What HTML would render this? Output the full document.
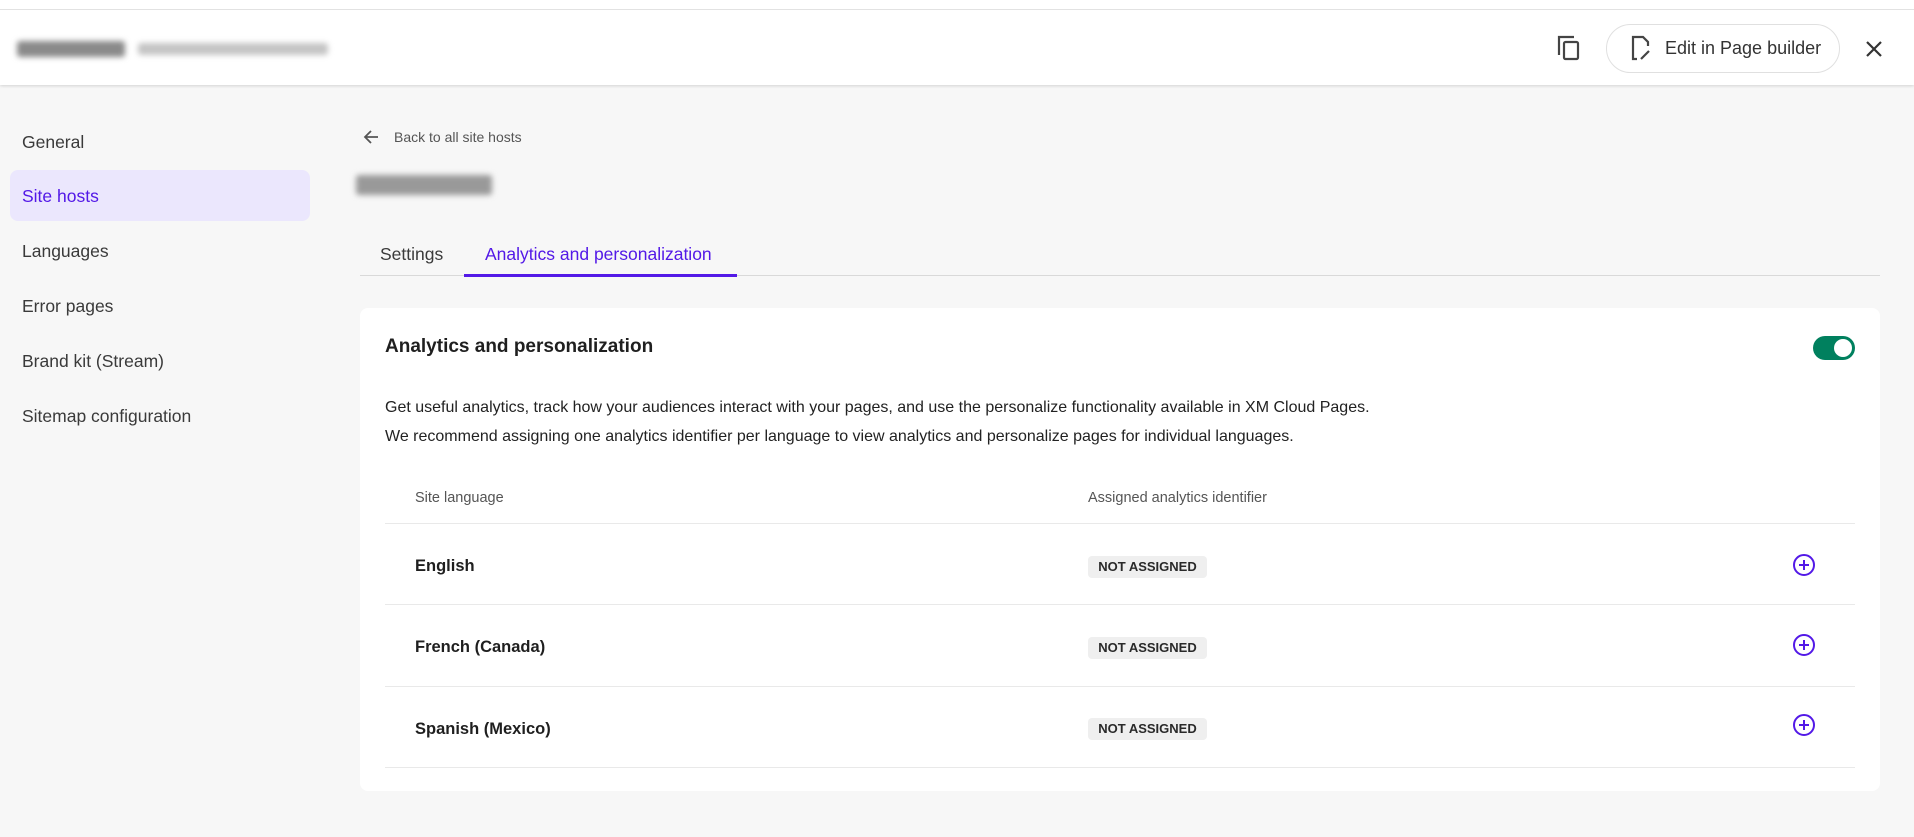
<!DOCTYPE html>
<html><head><meta charset="utf-8"><style>
*{box-sizing:border-box;margin:0;padding:0}
body{width:1914px;height:837px;background:#f7f7f7;font-family:"Liberation Sans",sans-serif;color:#1f1f1f;position:relative;overflow:hidden}
.abs{position:absolute}
.hdr{left:0;top:0;width:1914px;height:85px;background:#fff;border-top:10px solid #fff;box-shadow:0 1px 3px rgba(0,0,0,.15)}
.topline{left:0;top:9px;width:1914px;height:1px;background:#e2e2e2}
.blur{filter:blur(3px);background:#8a8a8a;border-radius:3px}
.nav{left:22px;font-size:17.5px;color:#3a3a3a}
.sel{left:10px;top:170px;width:300px;height:51px;background:#ebe7fd;border-radius:8px}
.card{left:360px;top:308px;width:1520px;height:483px;background:#fff;border-radius:8px}
.row{left:385px;width:1470px;height:1px;background:#e9e9e9}
.badge{left:1088px;width:119px;height:22px;background:#efefef;border-radius:4px;font-size:13px;font-weight:bold;color:#2a2a2a;line-height:22px;text-align:center}
.lang{left:415px;font-size:16.5px;font-weight:600;color:#1f1f1f}
</style></head><body>
<div class="abs hdr"></div>
<div class="abs topline"></div>
<div class="abs blur" style="left:17px;top:41px;width:108px;height:16px;background:#8a8a8a"></div>
<div class="abs blur" style="left:138px;top:43px;width:190px;height:12px;background:#c4c4c4"></div>
<svg class="abs" style="left:1556px;top:34px" width="28" height="28" viewBox="0 0 28 28" fill="none" stroke="#444" stroke-width="2.2"><path d="M3 21V3h15"/><rect x="8" y="8" width="14" height="17" rx="1.5"/></svg>
<div class="abs" style="left:1606px;top:24px;width:234px;height:49px;border:1px solid #e0e0e0;border-radius:25px"></div>
<svg class="abs" style="left:1628px;top:34px" width="26" height="28" viewBox="0 0 26 28" fill="none" stroke="#444" stroke-width="2.2"><path d="M9 25H5V3h10l5 5v4"/><path d="M13 25l8-8"/></svg>
<div class="abs" style="left:1665px;top:38px;font-size:18px;color:#333">Edit in Page builder</div>
<svg class="abs" style="left:1864px;top:39px" width="20" height="20" viewBox="0 0 20 20" stroke="#333" stroke-width="2.2"><path d="M3 3l14 14M17 3L3 17"/></svg>

<div class="abs sel"></div>
<div class="abs nav" style="top:132px">General</div>
<div class="abs nav" style="top:186px;color:#5319e7">Site hosts</div>
<div class="abs nav" style="top:241px">Languages</div>
<div class="abs nav" style="top:296px">Error pages</div>
<div class="abs nav" style="top:351px">Brand kit (Stream)</div>
<div class="abs nav" style="top:406px">Sitemap configuration</div>

<svg class="abs" style="left:362px;top:128px" width="18" height="18" viewBox="0 0 18 18" fill="none" stroke="#555" stroke-width="1.8"><path d="M16 9H3M9 3L3 9l6 6"/></svg>
<div class="abs" style="left:394px;top:129px;font-size:14px;color:#555">Back to all site hosts</div>
<div class="abs blur" style="left:356px;top:175px;width:136px;height:20px;background:#999"></div>

<div class="abs" style="left:380px;top:244px;font-size:17.5px;color:#3a3a3a">Settings</div>
<div class="abs" style="left:485px;top:244px;font-size:17.5px;color:#5319e7">Analytics and personalization</div>
<div class="abs" style="left:360px;top:275px;width:1520px;height:1px;background:#d9d9d9"></div>
<div class="abs" style="left:464px;top:274px;width:273px;height:3px;background:#5319e7"></div>

<div class="abs card"></div>
<div class="abs" style="left:385px;top:336px;font-size:19px;font-weight:600;color:#1f1f1f">Analytics and personalization</div>
<div class="abs" style="left:1813px;top:336px;width:42px;height:24px;border-radius:12px;background:#00805e"></div>
<div class="abs" style="left:1834px;top:339px;width:18px;height:18px;border-radius:50%;background:#fff"></div>
<div class="abs" style="left:385px;top:393px;font-size:16px;line-height:29px;color:#222">Get useful analytics, track how your audiences interact with your pages, and use the personalize functionality available in XM Cloud Pages.<br>We recommend assigning one analytics identifier per language to view analytics and personalize pages for individual languages.</div>
<div class="abs" style="left:415px;top:490px;font-size:14.5px;color:#555">Site language</div>
<div class="abs" style="left:1088px;top:490px;font-size:14.5px;color:#555">Assigned analytics identifier</div>
<div class="abs row" style="top:523px"></div>
<div class="abs row" style="top:604px"></div>
<div class="abs row" style="top:686px"></div>
<div class="abs row" style="top:767px"></div>
<div class="abs lang" style="top:557px">English</div>
<div class="abs lang" style="top:638px">French (Canada)</div>
<div class="abs lang" style="top:720px">Spanish (Mexico)</div>
<div class="abs badge" style="top:556px">NOT ASSIGNED</div>
<div class="abs badge" style="top:637px">NOT ASSIGNED</div>
<div class="abs badge" style="top:718px">NOT ASSIGNED</div>
<svg class="abs" style="left:1792px;top:553px" width="24" height="24" viewBox="0 0 24 24" fill="none" stroke="#5319e7" stroke-width="2"><circle cx="12" cy="12" r="10"/><path d="M12 7v10M7 12h10"/></svg>
<svg class="abs" style="left:1792px;top:633px" width="24" height="24" viewBox="0 0 24 24" fill="none" stroke="#5319e7" stroke-width="2"><circle cx="12" cy="12" r="10"/><path d="M12 7v10M7 12h10"/></svg>
<svg class="abs" style="left:1792px;top:713px" width="24" height="24" viewBox="0 0 24 24" fill="none" stroke="#5319e7" stroke-width="2"><circle cx="12" cy="12" r="10"/><path d="M12 7v10M7 12h10"/></svg>
</body></html>
